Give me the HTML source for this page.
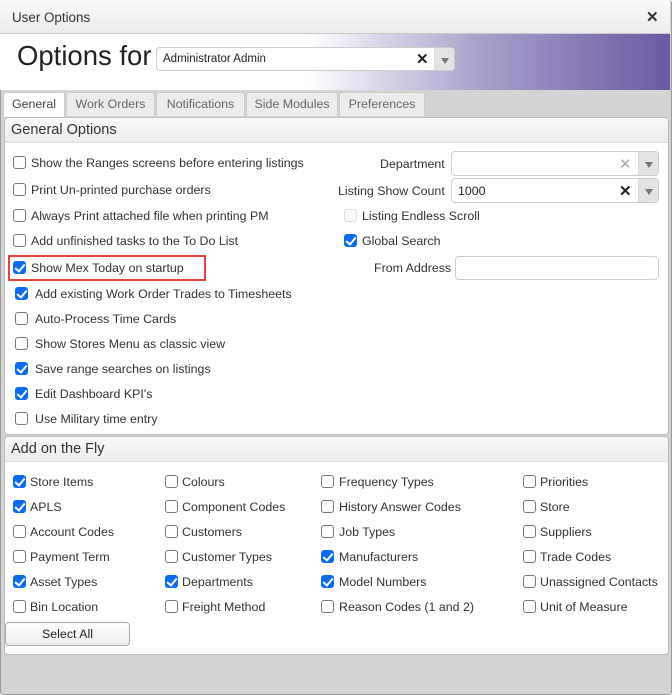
<!DOCTYPE html>
<html><head><meta charset="utf-8"><style>
*{box-sizing:border-box;margin:0;padding:0}
body{width:672px;height:695px;overflow:hidden;background:#fff;font-family:"Liberation Sans",Tahoma,sans-serif;font-size:12px;color:#222;position:relative}
.a{position:absolute;white-space:nowrap}
.win{position:absolute;left:0;top:0;width:672px;height:695px;border:1px solid #999;border-radius:3px;background:#d4d4d4}
.title{position:absolute;left:0;top:0;width:670px;height:34px;background:linear-gradient(#fafafa,#ebebeb);border-bottom:1px solid #ccc}
.hdr{position:absolute;left:0;top:34px;width:670px;height:56px;background:linear-gradient(90deg,#fff 0%,#fff 46%,#d9d5e8 57%,#a89fcb 72%,#6a5aa0 100%)}
.sel{position:absolute;background:#fff;border:1px solid #ccc;border-radius:4px}
.sel .dd{position:absolute;right:0;top:0;bottom:0;width:20px;background:#e3e3e3;border-left:1px solid #ddd;border-radius:0 4px 4px 0}
.sel .dd:after{content:"";position:absolute;left:6px;top:10px;border-left:4px solid transparent;border-right:4px solid transparent;border-top:6px solid #777}
.tab{position:absolute;top:92px;height:24px;background:#ececec;border:1px solid #ccc;border-bottom:none;color:#666;font-size:12.4px;text-align:center;line-height:23px;border-radius:3px 3px 0 0}
.panel{position:absolute;left:4px;width:665px;background:#fff;border:1px solid #bbb;border-radius:4px}
.ph{position:absolute;left:0;top:0;right:0;height:25px;background:linear-gradient(#fafafa,#ececec);border-bottom:1px solid #ddd;font-size:14.5px;padding-left:6px;line-height:25px;color:#333;border-radius:4px 4px 0 0}
.cb{position:absolute;width:13px;height:13px;border:1px solid #777;border-radius:3px;background:#fff}
.cb.on{background:#0a6cf5;border-color:#0a6cf5}
.cb.on:after{content:"";position:absolute;left:3px;top:0px;width:4px;height:8px;border:solid #fff;border-width:0 2px 2px 0;transform:rotate(40deg)}
.cb.dis{border-color:#ddd;background:#fafafa}
.t{position:absolute;white-space:nowrap;color:#333;font-size:12.4px;line-height:14px}
</style></head><body>
<div class="win"></div>
<div class="title"><span class="a" style="left:12px;top:10px;font-size:13.4px;color:#333">User Options</span><span class="a" style="left:646px;top:8px;font-size:15px;color:#333;font-weight:bold">✕</span></div>
<div class="hdr"><span class="a" style="left:17px;top:6px;font-size:27.5px;color:#222">Options for</span>
<div class="sel" style="left:156px;top:13px;width:299px;height:24px"><span class="a" style="left:6px;top:5px;font-size:11.5px">Administrator Admin</span><span class="a" style="left:259px;top:2px;font-size:15px;font-weight:bold">✕</span><div class="dd"></div></div></div>
<div class="tab" style="left:3px;width:62px;background:#fff;color:#444;height:25px">General</div>
<div class="tab" style="left:66px;width:89px">Work Orders</div>
<div class="tab" style="left:156px;width:89px">Notifications</div>
<div class="tab" style="left:246px;width:92px">Side Modules</div>
<div class="tab" style="left:339px;width:86px">Preferences</div>

<div class="panel" style="top:117px;height:318px"><div class="ph">General Options</div></div>
<div class="panel" style="top:436px;height:219px"><div class="ph">Add on the Fly</div></div>

<div id="g"></div>
<div class="a" style="left:8px;top:255px;width:198px;height:26px;border:2px solid #e0443c"></div>

<span class="t" style="left:380px;top:157px">Department</span>
<div class="sel" style="left:451px;top:151px;width:208px;height:25px"><span class="a" style="left:167px;top:3px;font-size:15px;color:#aaa">✕</span><div class="dd"></div></div>
<span class="t" style="left:338px;top:184px">Listing Show Count</span>
<div class="sel" style="left:451px;top:178px;width:208px;height:25px"><span class="a" style="left:6px;top:5px;font-size:12.4px">1000</span><span class="a" style="left:167px;top:3px;font-size:15px;font-weight:bold">✕</span><div class="dd"></div></div>
<span class="t" style="left:374px;top:261px">From Address</span>
<div class="sel" style="left:455px;top:256px;width:204px;height:24px"></div>

<div class="a" style="left:5px;top:622px;width:125px;height:24px;border:1px solid #aaa;border-radius:4px;background:linear-gradient(#fff,#ececec);text-align:center;line-height:22px;font-size:12.4px">Select All</div>

<script>
var g=document.getElementById('g'),h='';
function c(x,y,s,on,tx){h+='<div class="cb '+(on?on:'')+'" style="left:'+x+'px;top:'+(y-7)+'px"></div><span class="t" style="left:'+tx+'px;top:'+(y-7)+'px">'+s+'</span>';}
var L=[["Show the Ranges screens before entering listings",163,0,13,31],["Print Un-printed purchase orders",190,0,13,31],["Always Print attached file when printing PM",216,0,13,31],["Add unfinished tasks to the To Do List",241,0,13,31],["Show Mex Today on startup",268,"on",13,31],["Add existing Work Order Trades to Timesheets",294,"on",15,35],["Auto-Process Time Cards",319,0,15,35],["Show Stores Menu as classic view",344,0,15,35],["Save range searches on listings",369,"on",15,35],["Edit Dashboard KPI's",394,"on",15,35],["Use Military time entry",419,0,15,35],["Listing Endless Scroll",216,"dis",344,362],["Global Search",241,"on",344,362]];
L.forEach(function(r){c(r[3],r[1],r[0],r[2],r[4]);});
var cols=[[13,30],[165,182],[321,339],[523,540]],ys=[482,507,532,557,582,607];
var A=[[["Store Items",1],["APLS",1],["Account Codes",0],["Payment Term",0],["Asset Types",1],["Bin Location",0]],
[["Colours",0],["Component Codes",0],["Customers",0],["Customer Types",0],["Departments",1],["Freight Method",0]],
[["Frequency Types",0],["History Answer Codes",0],["Job Types",0],["Manufacturers",1],["Model Numbers",1],["Reason Codes (1 and 2)",0]],
[["Priorities",0],["Store",0],["Suppliers",0],["Trade Codes",0],["Unassigned Contacts",0],["Unit of Measure",0]]];
A.forEach(function(col,i){col.forEach(function(it,j){c(cols[i][0],ys[j],it[0],it[1]?"on":0,cols[i][1]);});});
g.innerHTML=h;
</script>
</body></html>
